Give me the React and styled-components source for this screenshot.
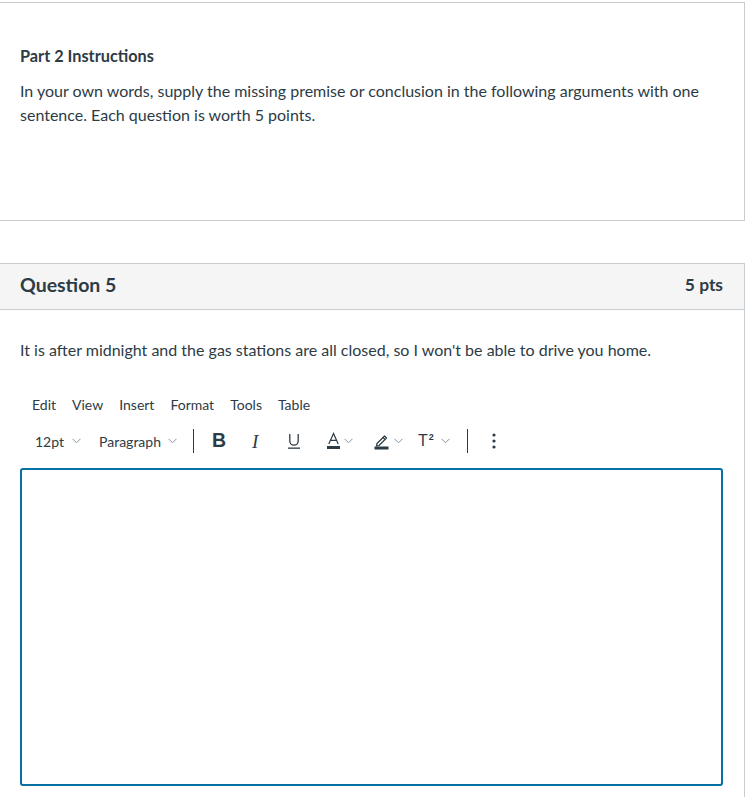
import React from "react";
import styled, { createGlobalStyle } from "styled-components";

const Global = createGlobalStyle`
  html, body { margin: 0; padding: 0; background: #fff; }
  body { font-family: Lato, "Open Sans", "Liberation Sans", sans-serif; color: #2d3b45; }
  * { box-sizing: border-box; }
`;

const Page = styled.div`
  width: 747px;
  height: 797px;
  overflow: hidden;
  padding-top: 2px;
`;

const Card = styled.section`
  width: 745px;
  border: 1px solid #c7cdd1;
  border-left: none;
  background: #fff;
  ${(p) => (p.$open ? "border-bottom: none;" : "")}
`;

const InstructionsBody = styled.div`
  height: 217px;
  padding: 42px 20px 0 20px;
`;

const InstrTitle = styled.h3`
  margin: 0 0 12px 0;
  font-size: 16.3px;
  line-height: 22px;
  font-weight: 700;
`;

const Paragraph = styled.p`
  margin: 0;
  font-size: 16px;
  line-height: 24px;
`;

const Spacer = styled.div`
  height: 42px;
`;

const QHeader = styled.header`
  height: 46px;
  background: #f5f5f5;
  border-bottom: 1px solid #c7cdd1;
  display: flex;
  align-items: center;
  justify-content: space-between;
  padding: 0 21px 4px 20px;
`;

const QTitle = styled.h2`
  margin: 0;
  font-size: 19.5px;
  font-weight: 700;
`;

const Points = styled.span`
  font-size: 17.4px;
  font-weight: 700;
`;

const QBody = styled.div`
  height: 490px;
  padding: 28px 21px 0 20px;
`;

const QText = styled.p`
  margin: 0;
  font-size: 16px;
  line-height: 24px;
`;

const MenuBar = styled.div`
  display: flex;
  margin-top: 27px;
  padding-left: 4px;
  height: 30px;
  align-items: center;
`;

const MenuItem = styled.span`
  font-size: 14px;
  padding: 0 8px;
  color: #2d3b45;
`;

const ToolBar = styled.div`
  display: flex;
  align-items: center;
  height: 38px;
  margin-top: 3px;
  padding-left: 15px;
`;

const Sep = styled.div`
  width: 1px;
  height: 24px;
  background: #2d3b45;
  margin-right: ${(p) => p.$mr || 0}px;
`;

const Select = styled.span`
  display: inline-flex;
  align-items: center;
  font-size: 14px;
  margin-right: ${(p) => p.$mr || 0}px;
  gap: ${(p) => p.$gap || 7}px;
`;

const Btn = styled.span`
  display: inline-flex;
  align-items: center;
  justify-content: flex-start;
  width: ${(p) => p.$w}px;
  margin-right: ${(p) => p.$mr || 0}px;
  gap: ${(p) => p.$gap || 4}px;
  color: #2d3b45;
`;

const BoldGlyph = styled.span`
  font-family: "Liberation Sans", Arial, sans-serif;
  font-weight: 700;
  font-size: 19.5px;
  line-height: 1;
`;

const ItalicGlyph = styled.span`
  font-family: "Liberation Serif", serif;
  font-style: italic;
  font-size: 19px;
  line-height: 1;
`;

const TGlyph = styled.span`
  font-family: "Liberation Sans", Arial, sans-serif;
  font-size: 16px;
  line-height: 1;
  sup { font-size: 9px; font-weight: 700; vertical-align: 6px; margin-left: 1px; }
`;

const Editor = styled.div`
  margin-top: 8px;
  height: 318px;
  border: 2px solid #0770a3;
  border-radius: 3px;
`;

const Chevron = () => (
  <svg width="9" height="6" viewBox="0 0 9 6">
    <polyline points="0.5,0.8 4.5,4.8 8.5,0.8" fill="none" stroke="#8a949c" strokeWidth="1" />
  </svg>
);

const UnderlineIcon = () => (
  <svg width="12" height="18" viewBox="0 0 12 18">
    <path d="M1.8 2 V9 a4.2 4.2 0 0 0 8.4 0 V2" fill="none" stroke="#2d3b45" strokeWidth="1.3" />
    <rect x="0" y="15.5" width="12" height="1.3" fill="#2d3b45" />
  </svg>
);

const TextColorIcon = () => (
  <svg width="13" height="18" viewBox="0 0 13 18">
    <path d="M1.8 12 L6.5 1.5 L11.2 12 M3.5 8.3 H9.5" fill="none" stroke="#2d3b45" strokeWidth="1.2" />
    <rect x="0" y="14" width="13" height="3" fill="#2d3b45" />
  </svg>
);

const HighlightIcon = () => (
  <svg width="15" height="18" viewBox="0 0 15 18">
    <path d="M3 11.5 L10.5 4 L12.5 6 L5 13.5 L2.5 13.8 Z" fill="none" stroke="#2d3b45" strokeWidth="1.2" strokeLinejoin="round" />
    <path d="M9 5.5 L11 7.5" stroke="#2d3b45" strokeWidth="1.1" />
    <rect x="0.5" y="14.5" width="14" height="3" fill="#2d3b45" />
  </svg>
);

const MoreIcon = () => (
  <svg width="4" height="18" viewBox="0 0 4 18">
    <circle cx="2" cy="3" r="1.6" fill="#2d3b45" />
    <circle cx="2" cy="9" r="1.6" fill="#2d3b45" />
    <circle cx="2" cy="15" r="1.6" fill="#2d3b45" />
  </svg>
);

export default function App() {
  return (
    <Page>
      <Global />
      <Card>
        <InstructionsBody>
          <InstrTitle>Part 2 Instructions</InstrTitle>
          <Paragraph>
            In your own words, supply the missing premise or conclusion in the following arguments with one
            sentence. Each question is worth 5 points.
          </Paragraph>
        </InstructionsBody>
      </Card>
      <Spacer />
      <Card $open>
        <QHeader>
          <QTitle>Question 5</QTitle>
          <Points>5 pts</Points>
        </QHeader>
        <QBody>
          <QText>
            It is after midnight and the gas stations are all closed, so I won't be able to drive you home.
          </QText>
          <MenuBar>
            {["Edit", "View", "Insert", "Format", "Tools", "Table"].map((m) => (
              <MenuItem key={m}>{m}</MenuItem>
            ))}
          </MenuBar>
          <ToolBar>
            <Select $mr={18} $gap={8}>
              12pt <Chevron />
            </Select>
            <Select $mr={16} $gap={7}>
              Paragraph <Chevron />
            </Select>
            <Sep $mr={18} />
            <Btn $w={14} $mr={26}>
              <BoldGlyph>B</BoldGlyph>
            </Btn>
            <Btn $w={9} $mr={27}>
              <ItalicGlyph>I</ItalicGlyph>
            </Btn>
            <Btn $w={12} $mr={27}>
              <UnderlineIcon />
            </Btn>
            <Btn $w={26} $mr={21} $gap={4}>
              <TextColorIcon />
              <Chevron />
            </Btn>
            <Btn $w={29} $mr={15} $gap={5}>
              <HighlightIcon />
              <Chevron />
            </Btn>
            <Btn $w={33} $mr={16} $gap={7}>
              <TGlyph>
                T<sup>2</sup>
              </TGlyph>
              <Chevron />
            </Btn>
            <Sep $mr={24} />
            <Btn $w={6}>
              <MoreIcon />
            </Btn>
          </ToolBar>
          <Editor />
        </QBody>
      </Card>
    </Page>
  );
}
